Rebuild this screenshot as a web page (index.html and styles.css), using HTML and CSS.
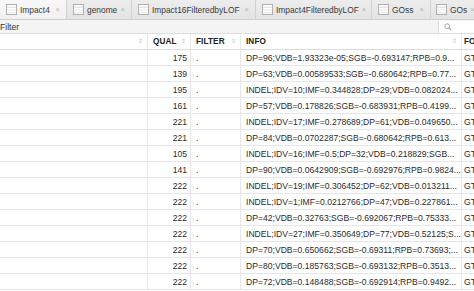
FILE: index.html
```html
<!DOCTYPE html>
<html>
<head>
<meta charset="utf-8">
<link rel="stylesheet" href="styles.css">
</head>
<body>
<div class="app">
  <div class="tabs">
    <div class="tab active" style="width:67px"><svg class="ico" viewBox="0 0 12 12"><rect x="0.5" y="0.5" width="11" height="11" fill="#fff" stroke="#a9a9a9"/><line x1="1" y1="3.5" x2="11" y2="3.5" stroke="#d6d6d6"/><line x1="1" y1="6.5" x2="11" y2="6.5" stroke="#e2e2e2"/><line x1="1" y1="9.5" x2="11" y2="9.5" stroke="#e2e2e2"/></svg><span class="tname">Impact4</span><span class="x">×</span></div>
    <div class="tab" style="width:65px"><svg class="ico" viewBox="0 0 12 12"><rect x="0.5" y="0.5" width="11" height="11" fill="#fff" stroke="#a9a9a9"/><line x1="1" y1="3.5" x2="11" y2="3.5" stroke="#d6d6d6"/><line x1="1" y1="6.5" x2="11" y2="6.5" stroke="#e2e2e2"/><line x1="1" y1="9.5" x2="11" y2="9.5" stroke="#e2e2e2"/></svg><span class="tname">genome</span><span class="x">×</span></div>
    <div class="tab" style="width:124px"><svg class="ico" viewBox="0 0 12 12"><rect x="0.5" y="0.5" width="11" height="11" fill="#fff" stroke="#a9a9a9"/><line x1="1" y1="3.5" x2="11" y2="3.5" stroke="#d6d6d6"/><line x1="1" y1="6.5" x2="11" y2="6.5" stroke="#e2e2e2"/><line x1="1" y1="9.5" x2="11" y2="9.5" stroke="#e2e2e2"/></svg><span class="tname">Impact16FilteredbyLOF</span><span class="x">×</span></div>
    <div class="tab" style="width:116px"><svg class="ico" viewBox="0 0 12 12"><rect x="0.5" y="0.5" width="11" height="11" fill="#fff" stroke="#a9a9a9"/><line x1="1" y1="3.5" x2="11" y2="3.5" stroke="#d6d6d6"/><line x1="1" y1="6.5" x2="11" y2="6.5" stroke="#e2e2e2"/><line x1="1" y1="9.5" x2="11" y2="9.5" stroke="#e2e2e2"/></svg><span class="tname">Impact4FilteredbyLOF</span><span class="x">×</span></div>
    <div class="tab" style="width:59px"><svg class="ico" viewBox="0 0 12 12"><rect x="0.5" y="0.5" width="11" height="11" fill="#fff" stroke="#a9a9a9"/><line x1="1" y1="3.5" x2="11" y2="3.5" stroke="#d6d6d6"/><line x1="1" y1="6.5" x2="11" y2="6.5" stroke="#e2e2e2"/><line x1="1" y1="9.5" x2="11" y2="9.5" stroke="#e2e2e2"/></svg><span class="tname">GOss</span><span class="x">×</span></div>
    <div class="tab last" style="width:43px"><svg class="ico" viewBox="0 0 12 12"><rect x="0.5" y="0.5" width="11" height="11" fill="#fff" stroke="#a9a9a9"/><line x1="1" y1="3.5" x2="11" y2="3.5" stroke="#d6d6d6"/><line x1="1" y1="6.5" x2="11" y2="6.5" stroke="#e2e2e2"/><line x1="1" y1="9.5" x2="11" y2="9.5" stroke="#e2e2e2"/></svg><span class="tname">GOs</span><span class="x">×</span></div>
  </div>
  <div class="filterbar">
    <span class="flabel">Filter</span>
    <div class="search"><svg class="sico" viewBox="0 0 10 10"><circle cx="4" cy="4" r="3" fill="none" stroke="#9a9a9a" stroke-width="1.1"/><line x1="6.2" y1="6.2" x2="9" y2="9" stroke="#9a9a9a" stroke-width="1.3"/></svg></div>
  </div>
  <div class="grid">
    <div class="row head">
      <div class="c c0"><span class="sort">⇕</span></div>
      <div class="c c1">QUAL<span class="sort">⇕</span></div>
      <div class="c c2">FILTER<span class="sort">⇕</span></div>
      <div class="c c3">INFO<span class="sort">⇕</span></div>
      <div class="c c4">FORMAT</div>
    </div>
    <div class="row"><div class="c c0"></div><div class="c c1 num">175</div><div class="c c2">.</div><div class="c c3">DP=96;VDB=1.93323e-05;SGB=-0.693147;RPB=0.9...</div><div class="c c4">GT:PL</div></div>
    <div class="row"><div class="c c0"></div><div class="c c1 num">139</div><div class="c c2">.</div><div class="c c3">DP=63;VDB=0.00589533;SGB=-0.680642;RPB=0.77...</div><div class="c c4">GT:PL</div></div>
    <div class="row"><div class="c c0"></div><div class="c c1 num">195</div><div class="c c2">.</div><div class="c c3">INDEL;IDV=10;IMF=0.344828;DP=29;VDB=0.082024...</div><div class="c c4">GT:PL</div></div>
    <div class="row"><div class="c c0"></div><div class="c c1 num">161</div><div class="c c2">.</div><div class="c c3">DP=57;VDB=0.178826;SGB=-0.683931;RPB=0.4199...</div><div class="c c4">GT:PL</div></div>
    <div class="row"><div class="c c0"></div><div class="c c1 num">221</div><div class="c c2">.</div><div class="c c3">INDEL;IDV=17;IMF=0.278689;DP=61;VDB=0.049650...</div><div class="c c4">GT:PL</div></div>
    <div class="row"><div class="c c0"></div><div class="c c1 num">221</div><div class="c c2">.</div><div class="c c3">DP=84;VDB=0.0702287;SGB=-0.680642;RPB=0.613...</div><div class="c c4">GT:PL</div></div>
    <div class="row"><div class="c c0"></div><div class="c c1 num">105</div><div class="c c2">.</div><div class="c c3">INDEL;IDV=16;IMF=0.5;DP=32;VDB=0.218829;SGB...</div><div class="c c4">GT:PL</div></div>
    <div class="row"><div class="c c0"></div><div class="c c1 num">141</div><div class="c c2">.</div><div class="c c3">DP=90;VDB=0.0642909;SGB=-0.692976;RPB=0.9824...</div><div class="c c4">GT:PL</div></div>
    <div class="row"><div class="c c0"></div><div class="c c1 num">222</div><div class="c c2">.</div><div class="c c3">INDEL;IDV=19;IMF=0.306452;DP=62;VDB=0.013211...</div><div class="c c4">GT:PL</div></div>
    <div class="row"><div class="c c0"></div><div class="c c1 num">222</div><div class="c c2">.</div><div class="c c3">INDEL;IDV=1;IMF=0.0212766;DP=47;VDB=0.227861...</div><div class="c c4">GT:PL</div></div>
    <div class="row"><div class="c c0"></div><div class="c c1 num">222</div><div class="c c2">.</div><div class="c c3">DP=42;VDB=0.32763;SGB=-0.692067;RPB=0.75333...</div><div class="c c4">GT:PL</div></div>
    <div class="row"><div class="c c0"></div><div class="c c1 num">222</div><div class="c c2">.</div><div class="c c3">INDEL;IDV=27;IMF=0.350649;DP=77;VDB=0.52125;S...</div><div class="c c4">GT:PL</div></div>
    <div class="row"><div class="c c0"></div><div class="c c1 num">222</div><div class="c c2">.</div><div class="c c3">DP=70;VDB=0.650662;SGB=-0.69311;RPB=0.73693;...</div><div class="c c4">GT:PL</div></div>
    <div class="row"><div class="c c0"></div><div class="c c1 num">222</div><div class="c c2">.</div><div class="c c3">DP=80;VDB=0.185763;SGB=-0.693132;RPB=0.3513...</div><div class="c c4">GT:PL</div></div>
    <div class="row"><div class="c c0"></div><div class="c c1 num">222</div><div class="c c2">.</div><div class="c c3">DP=72;VDB=0.148488;SGB=-0.692914;RPB=0.9492...</div><div class="c c4">GT:PL</div></div>
  </div>
</div>
</body>
</html>
```

FILE: styles.css
```css
html, body {
  margin: 0;
  padding: 0;
  width: 474px;
  height: 291px;
  overflow: hidden;
  background: #fff;
}
.app {
  width: 474px;
  height: 291px;
  overflow: hidden;
  font-family: "Liberation Sans", Arial, sans-serif;
  font-size: 8.6px;
  color: #2b2b2b;
}
.tabs {
  display: flex;
  height: 20px;
  background: linear-gradient(#ededed, #e3e3e3);
  border-bottom: 1px solid #cfcfcf;
  box-sizing: border-box;
  white-space: nowrap;
}
.tab {
  flex: none;
  display: flex;
  align-items: center;
  box-sizing: border-box;
  padding-left: 6px;
  padding-right: 6px;
  border-right: 1px solid #d2d2d2;
  height: 19px;
  font-size: 8.4px;
  color: #3a3a3a;
  overflow: hidden;
}
.tab.last {
  border-right: none;
  padding-left: 5px;
  padding-right: 2px;
}
.tab.active {
  background: linear-gradient(#f8f8f8, #f0f0f0);
}
.ico {
  width: 11px;
  height: 11px;
  flex: none;
  margin-right: 3px;
}
.tname {
  flex: none;
}
.x {
  flex: none;
  color: #b4b4b4;
  margin-left: auto;
  padding-left: 3px;
  font-size: 7.5px;
}
.filterbar {
  display: flex;
  align-items: center;
  justify-content: space-between;
  height: 13px;
  background: #f4f4f4;
  border-bottom: 1px solid #dedede;
}
.flabel {
  font-size: 8.6px;
  color: #333;
}
.search {
  width: 36px;
  height: 12px;
  background: #fff;
  border-left: 1px solid #dcdcdc;
  box-sizing: border-box;
  display: flex;
  align-items: center;
  padding-left: 5px;
}
.sico {
  width: 8px;
  height: 8px;
}
.grid {
  display: flex;
  flex-direction: column;
}
.row {
  display: flex;
  height: 16px;
  border-bottom: 1px solid #e6e6e6;
  box-sizing: border-box;
  white-space: nowrap;
}
.row.head {
  border-bottom: 1px solid #dcdcdc;
  font-weight: bold;
  font-size: 8.2px;
  letter-spacing: 0.1px;
  color: #222;
}
.c {
  flex: none;
  box-sizing: border-box;
  display: flex;
  align-items: center;
  overflow: hidden;
  border-right: 1px solid #e8e8e8;
  padding-left: 5px;
  position: relative;
}
.c0 { width: 148px; }
.c1 { width: 43px; }
.c2 { width: 50px; }
.c3 { width: 221px; }
.c4 { width: 40px; border-right: none; padding-left: 2px; }
.num {
  justify-content: flex-end;
  padding-right: 3px;
}
.sort {
  position: absolute;
  right: 4px;
  top: 3px;
  font-size: 6px;
  color: #c8c8c8;
  font-weight: normal;
}
```
